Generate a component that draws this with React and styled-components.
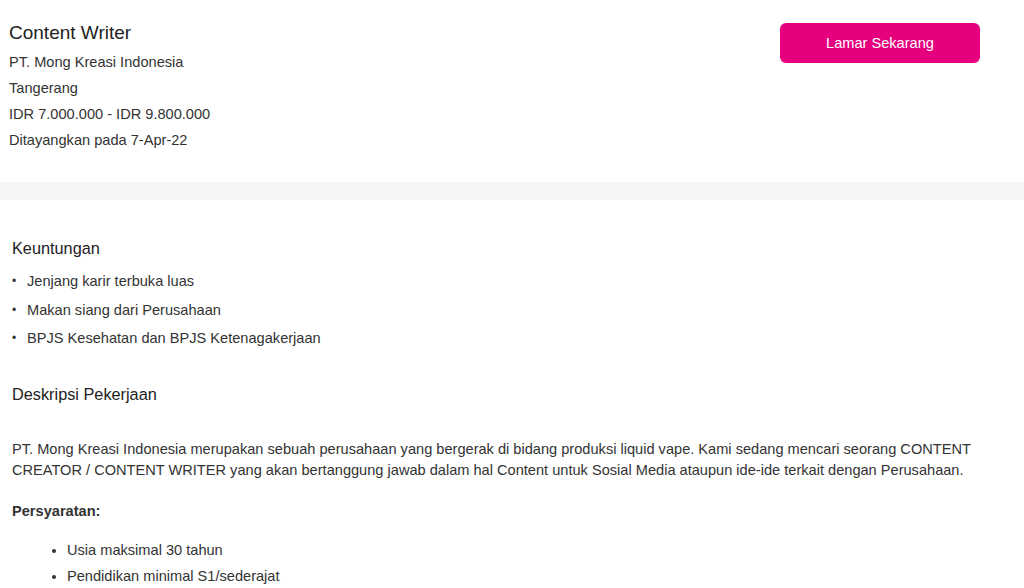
import React from 'react'
import styled, { createGlobalStyle } from 'styled-components'

const GlobalStyle = createGlobalStyle`
    body {
        margin: 0;
        background: #ffffff;
        font-family: "Liberation Sans", Arial, sans-serif;
        color: #333333;
    }
`;

const job = {
    title: "Content Writer",
    company: "PT. Mong Kreasi Indonesia",
    location: "Tangerang",
    salary: "IDR 7.000.000 - IDR 9.800.000",
    posted: "Ditayangkan pada 7-Apr-22",
    benefits: [
        "Jenjang karir terbuka luas",
        "Makan siang dari Perusahaan",
        "BPJS Kesehatan dan BPJS Ketenagakerjaan",
    ],
    description: "PT. Mong Kreasi Indonesia merupakan sebuah perusahaan yang bergerak di bidang produksi liquid vape. Kami sedang mencari seorang CONTENT CREATOR / CONTENT WRITER yang akan bertanggung jawab dalam hal Content untuk Sosial Media ataupun ide-ide terkait dengan Perusahaan.",
    requirements: [
        "Usia maksimal 30 tahun",
        "Pendidikan minimal S1/sederajat",
    ],
};

function App() {
    return (
        <Page>
            <GlobalStyle />
            <Header>
                <Info>
                    <Title>{job.title}</Title>
                    <Meta>
                        <span>{job.company}</span>
                        <span>{job.location}</span>
                        <span>{job.salary}</span>
                        <span>{job.posted}</span>
                    </Meta>
                </Info>
                <ApplyButton>Lamar Sekarang</ApplyButton>
            </Header>
            <Divider />
            <Content>
                <SectionTitle>Keuntungan</SectionTitle>
                <BenefitList>
                    {job.benefits.map((b) => <li key={b}>{b}</li>)}
                </BenefitList>

                <SectionTitle $top={31}>Deskripsi Pekerjaan</SectionTitle>
                <Paragraph>{job.description}</Paragraph>
                <Label>Persyaratan:</Label>
                <RequirementList>
                    {job.requirements.map((r) => <li key={r}>{r}</li>)}
                </RequirementList>
            </Content>
        </Page>
    )
}

const Page = styled.div`
    width: 100%;
`;

const Header = styled.header`
    display: flex;
    justify-content: space-between;
    align-items: flex-start;
    padding: 21px 44px 29px 9px;
`;

const Info = styled.div`
    display: flex;
    flex-direction: column;
`;

const Title = styled.h1`
    margin: 0 0 4px;
    font-size: 19px;
    line-height: 24px;
    font-weight: 400;
    color: #222222;
`;

const Meta = styled.div`
    display: flex;
    flex-direction: column;
    font-size: 14.6px;
    line-height: 26px;
    color: #333333;
`;

const ApplyButton = styled.button`
    margin-top: 2px;
    width: 200px;
    height: 40px;
    border: none;
    border-radius: 6px;
    background: #e6007e;
    color: #ffffff;
    font-family: "Liberation Sans", Arial, sans-serif;
    font-size: 14.6px;
    cursor: pointer;
`;

const Divider = styled.div`
    height: 18px;
    background: #f4f6f8;
`;

const Content = styled.main`
    padding: 38px 12px 0;
`;

const SectionTitle = styled.h2`
    margin: ${(p) => p.$top || 0}px 0 0;
    font-size: 16.3px;
    line-height: 20px;
    font-weight: 400;
    color: #222222;
`;

const BenefitList = styled.ul`
    list-style: none;
    margin: 9px 0 0;
    padding: 0;
    font-size: 14.6px;
    line-height: 28.5px;

    li {
        position: relative;
        padding-left: 15px;
    }
    li::before {
        content: "•";
        position: absolute;
        left: 0;
        font-size: 12px;
    }
`;

const Paragraph = styled.p`
    margin: 35px 0 0;
    font-size: 14.6px;
    line-height: 21px;
`;

const Label = styled.p`
    margin: 20px 0 0;
    font-size: 14.6px;
    line-height: 21px;
    font-weight: 700;
`;

const RequirementList = styled.ul`
    margin: 15px 0 0;
    padding-left: 55px;
    font-size: 14.6px;
    line-height: 26px;
`;

export default App
